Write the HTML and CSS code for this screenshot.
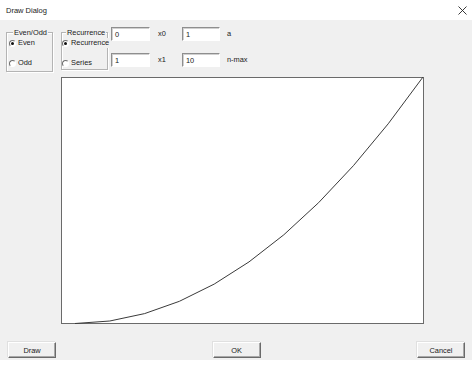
FILE: index.html
```html
<!DOCTYPE html>
<html>
<head>
<meta charset="utf-8">
<title>Draw Dialog</title>
<link rel="stylesheet" href="styles.css">
</head>
<body>
<div class="window">
  <div class="titlebar">
    <span class="title">Draw Dialog</span>
    <svg class="close" width="9" height="9" viewBox="0 0 9 9"><path d="M0.5 0.5 L8.5 8.5 M8.5 0.5 L0.5 8.5" stroke="#222" stroke-width="0.9" fill="none"/></svg>
  </div>
  <div class="body">
    <div class="top">
      <div class="group g1">
        <div class="legend">Even/Odd</div>
        <div class="opt first"><span class="radio checked"></span><span class="opt-label">Even</span></div>
        <div class="opt"><span class="radio"></span><span class="opt-label">Odd</span></div>
      </div>
      <div class="group g2">
        <div class="legend">Recurrence</div>
        <div class="opt first"><span class="radio checked"></span><span class="opt-label">Recurrence</span></div>
        <div class="opt"><span class="radio"></span><span class="opt-label">Series</span></div>
      </div>
      <div class="fields">
        <div class="box">0</div><div class="lbl">x0</div><div class="box">1</div><div class="lbl lbl2">a</div>
        <div class="box">1</div><div class="lbl">x1</div><div class="box">10</div><div class="lbl lbl2">n-max</div>
      </div>
    </div>
    <div class="plot">
      <svg class="curve" width="361" height="245" viewBox="62 78 361 245">
        <polyline fill="none" stroke="#3a3a3a" stroke-width="1" points="75,323.5 109.8,321 144.6,313.6 179.4,301.3 214.2,284.1 249,261.9 283.8,234.8 318.6,202.7 353.4,165.7 388.2,123.8 423,77"/>
      </svg>
    </div>
    <div class="buttons">
      <button class="btn">Draw</button>
      <button class="btn">OK</button>
      <button class="btn">Cancel</button>
    </div>
  </div>
</div>
</body>
</html>
```
FILE: styles.css
```css
html, body {
  margin: 0;
  padding: 0;
  background: #fff;
}
.window {
  width: 474px;
  height: 365px;
  overflow: hidden;
  background: #fff;
  font-family: "Liberation Sans", Arial, sans-serif;
  font-size: 7.4px;
  color: #1a1a1a;
}
.titlebar {
  height: 20px;
  display: flex;
  align-items: center;
  justify-content: space-between;
  padding-left: 6px;
  box-sizing: border-box;
}
.title {
  font-size: 7.5px;
  margin-top: 1px;
}
.close {
  display: block;
  margin-right: 7px;
  margin-top: 1px;
}
.body {
  width: 472px;
  height: 340px;
  background: #f0f0f0;
  padding: 7px 0 0 6px;
  box-sizing: border-box;
}
.top {
  display: flex;
  align-items: flex-start;
  height: 45px;
}
.group {
  margin-top: 5px;
  width: 47px;
  box-sizing: border-box;
  border: 1px solid #b4b4b4;
  box-shadow: inset 1px 1px 0 #fff, 1px 1px 0 #fff;
}
.g1 {
  height: 40px;
  padding-left: 2px;
}
.g2 {
  height: 38px;
  margin-left: 8px;
}
.legend {
  margin: -5px 0 0 4px;
  line-height: 9px;
  height: 9px;
  padding: 0 1px;
  background: #f0f0f0;
  width: max-content;
  white-space: nowrap;
}
.opt {
  display: flex;
  align-items: center;
  height: 10px;
  margin-top: 10px;
  white-space: nowrap;
}
.opt.first {
  margin-top: 1px;
}
.radio {
  width: 7px;
  height: 7px;
  flex: none;
  box-sizing: border-box;
  border-radius: 50%;
  border: 1px solid;
  border-color: #6e6e6e #fff #fff #6e6e6e;
  background: #fff;
  margin-right: 2px;
  display: flex;
  align-items: center;
  justify-content: center;
}
.radio.checked::after {
  content: "";
  width: 3px;
  height: 3px;
  border-radius: 50%;
  background: #111;
}
.opt-label {
  background: #f0f0f0;
  line-height: 10px;
  padding-right: 1px;
}
.fields {
  display: grid;
  grid-template-columns: 39px 32px 38px auto;
  grid-template-rows: 14px 14px;
  row-gap: 12px;
  margin-left: 3px;
}
.box {
  background: #fff;
  box-sizing: border-box;
  border: 1px solid;
  border-color: #8e8e8e #fff #fff #8e8e8e;
  box-shadow: inset 1px 1px 0 #d0d0d0;
  padding-left: 3px;
  display: flex;
  align-items: center;
}
.lbl {
  padding-left: 8px;
  display: flex;
  align-items: center;
  white-space: nowrap;
  margin-top: -1px;
}
.lbl2 {
  padding-left: 7px;
}
.plot {
  margin: 5px 0 0 55px;
  width: 363px;
  height: 247px;
  box-sizing: border-box;
  border: 1px solid #6a6a6a;
  background: #fff;
}
.curve {
  display: block;
  overflow: visible;
}
.buttons {
  display: flex;
  justify-content: space-between;
  margin: 18px 7px 0 2px;
}
.btn {
  width: 48px;
  height: 16px;
  padding: 0;
  margin: 0;
  box-sizing: border-box;
  font-family: "Liberation Sans", Arial, sans-serif;
  font-size: 7.4px;
  color: #1a1a1a;
  background: #f0f0f0;
  border: 1px solid;
  border-color: #fff #6a6a6a #6a6a6a #fff;
  box-shadow: inset -1px -1px 0 #a8a8a8, -1px -1px 0 #e0e0e0;
  border-radius: 0;
}
```
